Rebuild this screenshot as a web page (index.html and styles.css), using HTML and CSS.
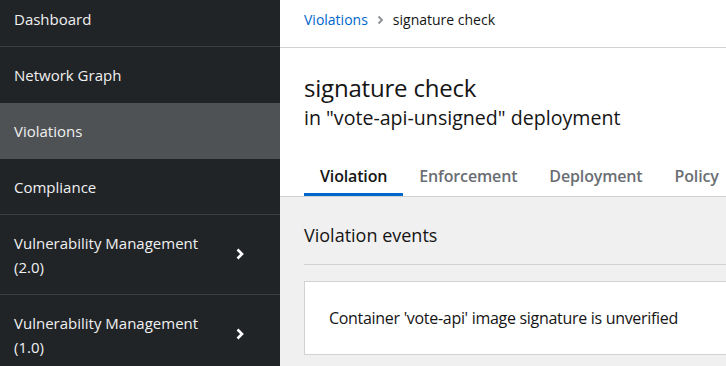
FILE: index.html
```html
<!DOCTYPE html>
<html lang="en">
<head>
<meta charset="utf-8">
<title>signature check</title>
<link rel="stylesheet" href="styles.css">
</head>
<body>
<div class="app">
  <nav class="sidebar">
    <ul class="nav-list">
      <li class="nav-item">Dashboard</li>
      <li class="nav-item before-active">Network Graph</li>
      <li class="nav-item active">Violations</li>
      <li class="nav-item">Compliance</li>
      <li class="nav-item expandable">
        <span class="nav-text">Vulnerability Management (2.0)</span>
        <svg class="chev" width="8" height="12" viewBox="0 0 8 12"><path d="M1.5 1.5 L6 6 L1.5 10.5" fill="none" stroke="#fff" stroke-width="2.6" stroke-linejoin="miter"/></svg>
      </li>
      <li class="nav-item expandable">
        <span class="nav-text">Vulnerability Management (1.0)</span>
        <svg class="chev" width="8" height="12" viewBox="0 0 8 12"><path d="M1.5 1.5 L6 6 L1.5 10.5" fill="none" stroke="#fff" stroke-width="2.6" stroke-linejoin="miter"/></svg>
      </li>
    </ul>
  </nav>
  <main class="main">
    <div class="breadcrumb">
      <a class="crumb-link">Violations</a>
      <svg class="crumb-sep" width="7" height="10" viewBox="0 0 7 10"><path d="M1.5 1.5 L5 5 L1.5 8.5" fill="none" stroke="#8a8d90" stroke-width="1.8"/></svg>
      <span class="crumb-current">signature check</span>
    </div>
    <div class="page-head">
      <h1 class="title">signature check</h1>
      <div class="subtitle">in "vote-api-unsigned" deployment</div>
    </div>
    <div class="tabs">
      <div class="tab active">Violation</div>
      <div class="tab">Enforcement</div>
      <div class="tab">Deployment</div>
      <div class="tab">Policy</div>
    </div>
    <section class="events">
      <h2 class="events-title">Violation events</h2>
      <div class="card">Container 'vote-api' image signature is unverified</div>
    </section>
  </main>
</div>
</body>
</html>
```
FILE: styles.css
```css
* { box-sizing: border-box; }
html, body { margin: 0; padding: 0; }
body {
  width: 726px;
  height: 366px;
  overflow: hidden;
  font-family: "Open Sans", "Liberation Sans", sans-serif;
  color: #151515;
  background: #fff;
}
.app {
  display: grid;
  grid-template-columns: 280px 1fr;
  height: 366px;
}
.sidebar {
  background: #212427;
  overflow: hidden;
}
.nav-list {
  list-style: none;
  margin: -9px 0 0 0;
  padding: 0;
}
.nav-item {
  color: #f0f0f0;
  font-size: 15px;
  line-height: 24px;
  padding: 16px 14px 15px;
  border-bottom: 1px solid #3c3f42;
  display: flex;
  align-items: center;
}
.nav-item.before-active {
  border-bottom: 0;
  padding-bottom: 16px;
}
.nav-item.active {
  background: #4f5255;
  border-bottom-color: #4f5255;
}
.nav-item.expandable .nav-text {
  width: 200px;
}
.chev {
  margin-left: 22px;
  margin-top: -2px;
}
.main {
  background: #f0f0f0;
  overflow: hidden;
  display: flex;
  flex-direction: column;
}
.breadcrumb {
  background: #fff;
  display: flex;
  align-items: center;
  gap: 8px;
  font-size: 14px;
  line-height: 21px;
  padding: 9px 24px 17px;
  border-bottom: 1px solid #d2d2d2;
}
.crumb-link { color: #0066cc; }
.crumb-sep { margin: 0 1px; }
.crumb-current { color: #151515; }
.page-head {
  background: #fff;
  padding: 25px 24px 23px;
}
.title {
  margin: 0;
  font-size: 24px;
  font-weight: 400;
  line-height: 30px;
  letter-spacing: -0.2px;
}
.subtitle {
  font-size: 19.6px;
  line-height: 30px;
}
.tabs {
  background: #fff;
  display: flex;
  padding: 0 24px;
  border-bottom: 1px solid #d2d2d2;
}
.tab {
  font-size: 16px;
  font-weight: 600;
  line-height: 24px;
  padding: 8px 16px;
  color: #6a6e73;
  white-space: nowrap;
  letter-spacing: -0.15px;
}
.tab.active {
  color: #151515;
  box-shadow: inset 0 -3px 0 #0066cc;
}
.events {
  padding: 23px 0 0 24px;
  margin-right: -30px;
}
.events-title {
  margin: 0;
  font-size: 18px;
  font-weight: 400;
  line-height: 30px;
  padding-bottom: 14px;
  border-bottom: 1px solid #d2d2d2;
}
.card {
  margin-top: 16px;
  background: #fff;
  border: 1px solid #d2d2d2;
  padding: 24px;
  font-size: 16px;
  line-height: 24px;
  letter-spacing: -0.3px;
}
```
